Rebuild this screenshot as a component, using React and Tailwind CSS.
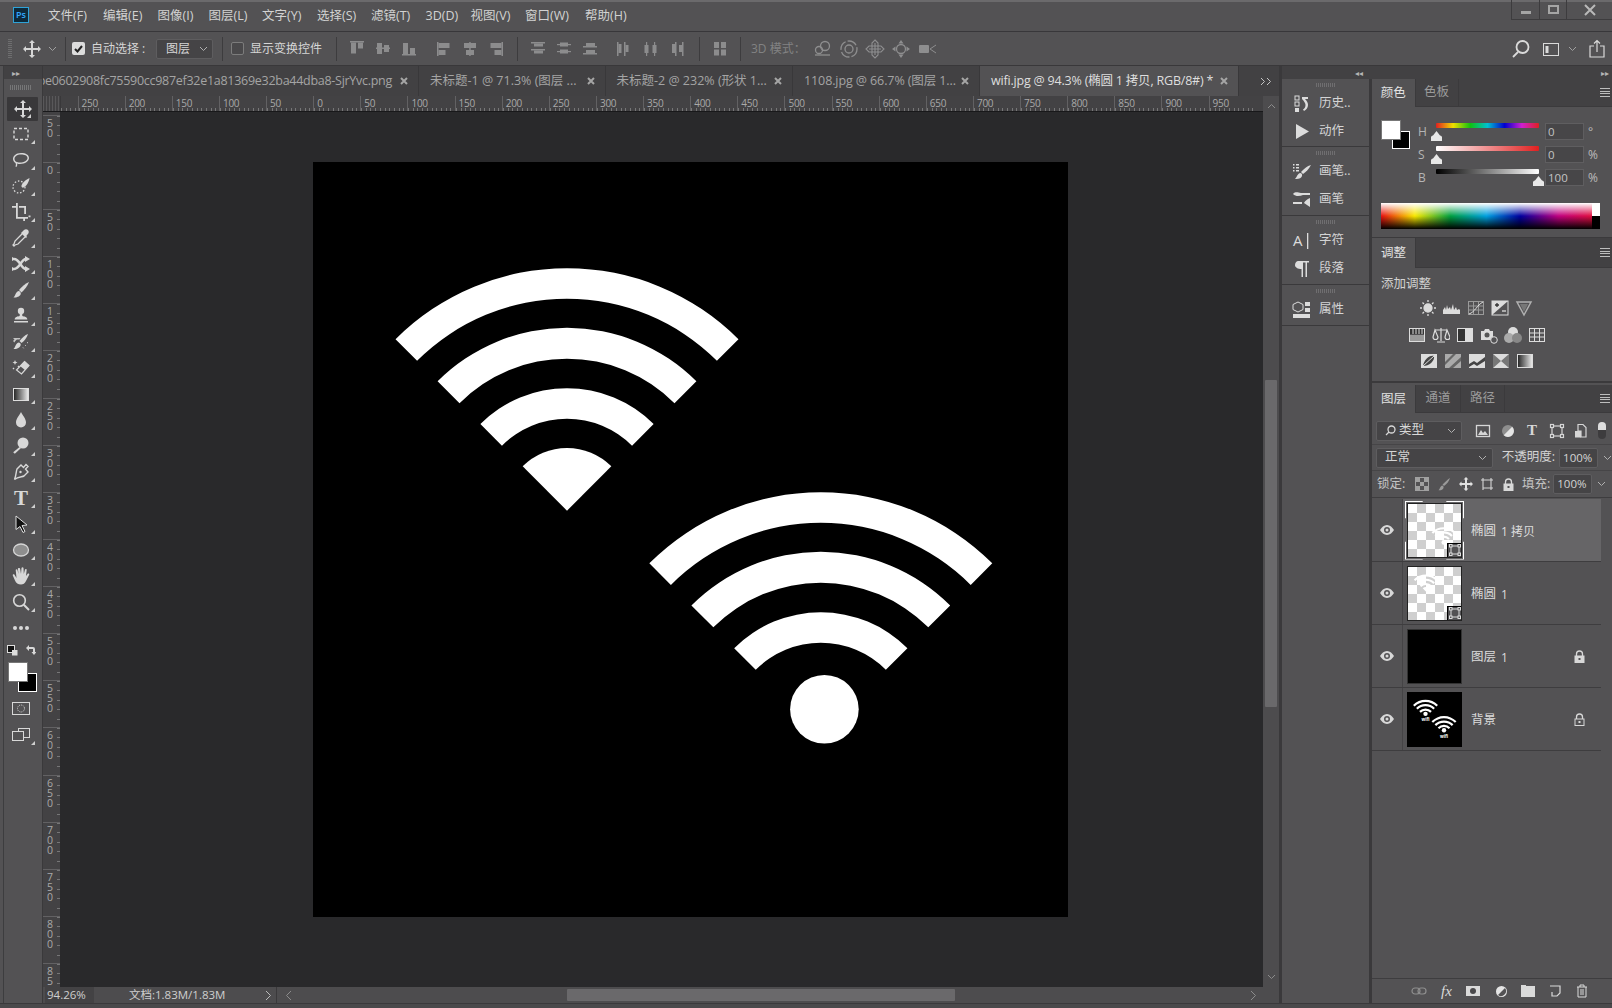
import React from "react";

const S = ({ w = 20, h = 20, className = "", children }) => (
  <svg width={w} height={h} viewBox={`0 0 ${w} ${h}`} fill="currentColor" className={`shrink-0 ${className}`}>
    {children}
  </svg>
);

const sectorPath = (cx, cy, ro, ri) => {
  const s = Math.SQRT1_2;
  const outer = `M${cx - ro * s} ${cy - ro * s}A${ro} ${ro} 0 0 1 ${cx + ro * s} ${cy - ro * s}`;
  if (!ri) return `${outer}L${cx} ${cy}Z`;
  return `${outer}L${cx + ri * s} ${cy - ri * s}A${ri} ${ri} 0 0 0 ${cx - ri * s} ${cy - ri * s}Z`;
};

const WifiBands = ({ cx, cy }) => (
  <>
    <path d={sectorPath(cx, cy, 242.5, 212)} />
    <path d={sectorPath(cx, cy, 183, 152)} />
    <path d={sectorPath(cx, cy, 122.5, 92)} />
  </>
);

const WifiArt = ({ size = 755, first = true, second = true, thumb = false, fill = "#fff", opacity = 1 }) => (
  <svg width={size} height={size} viewBox="0 0 755 755" fill={fill} opacity={opacity} className="block">
    {first && (
      <g>
        <WifiBands cx={254} cy={348.7} />
        {thumb ? <circle cx="254" cy="300" r="30" /> : <path d={sectorPath(254, 348.7, 62.7)} />}
      </g>
    )}
    {second && (
      <g>
        <WifiBands cx={507.8} cy={572.8} />
        <circle cx={thumb ? 507.8 : 511.4} cy={thumb ? 525 : 547.2} r={thumb ? 30 : 34.3} />
      </g>
    )}
    {thumb && (
      <g fontSize="60" fontWeight="700" fontFamily="'Open Sans',sans-serif" textAnchor="middle">
        <text x="254" y="395">wifi</text>
        <text x="507.8" y="625">wifi</text>
      </g>
    )}
  </svg>
);

const Chev = ({ className = "" }) => (
  <svg width="9" height="6" viewBox="0 0 9 6" fill="none" stroke="currentColor" className={`shrink-0 ${className}`}>
    <path d="M1 1l3.5 3.5L8 1" />
  </svg>
);

const Corner = () => (
  <svg width="4" height="4" viewBox="0 0 4 4" fill="#cfcfcf" className="absolute right-[7px] bottom-[3px]">
    <path d="M4 0v4H0z" />
  </svg>
);

const toolIcons = [
  <path d="M10 1l3 3h-2v5h5V7l3 3-3 3v-2h-5v5h2l-3 3-3-3h2v-5H4v2l-3-3 3-3v2h5V4H7z" />,
  <rect x="3" y="4.5" width="14" height="11" fill="none" stroke="currentColor" strokeWidth="1.4" strokeDasharray="3 2" />,
  <path d="M10 3c5 0 8 2 8 5s-4 6-9 6c-1 0-2 0-3-.5.5 1 .3 2.500-.7 3.500l-1-.7c.7-.7.8-2 .2-3.300C3 12 2 10.500 2 9c0-3 3-6 8-6zm0 1.500C6 4.500 3.500 6.500 3.500 9s2.500 3.500 5.500 3.500c4 0 7.500-2 7.500-4.500s-3-3.500-6.500-3.500z" />,
  <g><circle cx="8" cy="11" r="6" fill="none" stroke="currentColor" strokeWidth="1.3" strokeDasharray="1.500 1.800" /><path d="M18.500 2c-.5 4-3 8-6 9.500-1 .5-2.500-.5-2-2C11.500 6.500 15 3.500 18.500 2z" /></g>,
  <path d="M1 5h4V2h1.800v14H17v1.800h-3V20h-1.800v-2.200H5V6.800H1zM8 5h7v8h-1.800V6.800H8zM17.500 14.500h2v1.800h-2z" transform="translate(0 -1)" />,
  <g><path d="M12 5l3 3-8 8-3 1-1 1-1-1 1-1 1-3z" fill="none" stroke="currentColor" strokeWidth="1.3" /><path d="M11 4l2-2c1-1 3-1 4 0s1 3 0 4l-2 2 1 1-1 1-5-5 1-1z" /></g>,
  <g><path d="M3 5c6 0 7 10 12 10M3 15c6 0 7-10 12-10" fill="none" stroke="currentColor" strokeWidth="2.600" /><path d="M1 3l4 2-4 2zM1 13l4 2-4 2zM14 2l5 3-5 3zM14 12l5 3-5 3z" /></g>,
  <g><path d="M18 2c-1.500 4-4.500 8-7.500 10.500L8 10C10.500 7 14 3.500 18 2z" /><path d="M7.500 11c1.500 0 2.500 1.500 2.300 2.800C9.500 16 6 18 2.500 17.500 4.500 16 4.500 12 7.500 11z" /></g>,
  <g><circle cx="10" cy="5" r="3.200" /><path d="M8.700 7.500h2.600V10c2 .5 5 .8 5 3.500H3.700c0-2.700 3-3 5-3.500zM3 15h14v1.600H3z" /></g>,
  <g><path d="M17 2c-1 3.500-3.500 7-6.500 9l-2-2C11 6 14 3 17 2z" /><path d="M7.500 10.500c1.500 0 2.500 1.300 2.200 2.600C9.300 15.500 6 17.500 2.500 17c2-1.500 2-5.500 5-6.500z" /><path d="M2 6h7.500l-1 1.500H6c-1 .5-2 1.500-2.500 3L2 9l1.500-1.500z" opacity=".85" /><path d="M14 13l1 1M16 10.500l1.300.5M12 15.500l.8 1" fill="none" stroke="currentColor" strokeDasharray="1 1" /></g>,
  <g><path d="M13.500 3.500l4.500 4L10.500 16l-5-4z" fill="none" stroke="currentColor" strokeWidth="1.200" /><path d="M13.500 3.500l4.500 4-4 4.500-5-4z" /><path d="M4 2l.7 1.800L6.500 4.500 4.700 5.200 4 7l-.7-1.800L1.500 4.500l1.800-.7zM2.500 9.500l1 1-1 1-1-1zM7.500 7.500l1 1-1 1-1-1z" /></g>,
  <g><defs><linearGradient id="tg"><stop offset="0" stopColor="#222" /><stop offset="1" stopColor="#eee" /></linearGradient></defs><rect x="2.500" y="4.500" width="15" height="12" fill="url(#tg)" stroke="#ddd" /></g>,
  <path d="M10 2c1.500 3.500 5 6.500 5 10.500a5 5 0 0 1-10 0C5 8.500 8.500 5.500 10 2z" />,
  <g><circle cx="12" cy="7" r="5.500" /><path d="M8.500 11l1.300 1.300-6 5.500-1.600-1.500z" /></g>,
  <g><path d="M16 2.500l2 2-2.500 2.500L18 10l-4 4c-2 1-6 .5-9.500 3.500C6.500 13 6 9 7 7l4-4 2.500 2.500z" fill="none" stroke="currentColor" strokeWidth="1.400" transform="translate(-1 0)" /><circle cx="9.500" cy="10" r="1.200" /></g>,
  null,
  <path d="M5 2l11 9-5 .5 3 6-2 1-3-6-4 3z" fill="#111" stroke="#ddd" strokeWidth="1" />,
  <ellipse cx="10" cy="10" rx="7.500" ry="6" fill="#8e8e8e" stroke="#d5d5d5" strokeWidth="1.300" />,
  <path d="M8 2c.8 0 1 .5 1.200 1L10 8l.5-6c.2-1 1.800-1 2 0l.3 6 1.200-4.500c.3-1 1.800-.7 1.700.3L15 10l1.500-2c.8-1 2.200-.2 1.700.8L15 15c-1 2.500-3 3.500-5 3.500-3 0-5-1.500-6-4L1.800 9.500c-.4-1 1-1.700 1.700-.8L5.500 12l-.8-8c0-1 1.500-1.200 1.700-.2L7.500 8 6.900 3c0-.6.4-1 1.100-1z" />,
  <g fill="none" stroke="currentColor" strokeWidth="1.600"><circle cx="8.500" cy="8.500" r="5.800" /><path d="M12.800 12.800L18 18" strokeWidth="2" /></g>,
  <g><circle cx="4" cy="10" r="2" /><circle cx="10" cy="10" r="2" /><circle cx="16" cy="10" r="2" /></g>,
];

const Toolbar = () => (
  <div className="w-[40px] ml-[3px] border-l border-[#3d3d3f] border-r border-r-[#3a393b] bg-[#535254] flex flex-col shrink-0 text-[#d8d8d8]">
    <div className="h-[13px] bg-[#424143] flex items-center pl-[8px] text-[#b5b5b5] text-[8px] leading-none">▸▸</div>
    <div className="h-[17px] flex items-center justify-center pr-[4px]"><div className="w-[22px] h-[5px] bg-[repeating-linear-gradient(to_right,#767677_0_1px,transparent_1px_2px)]" /></div>
    <div className="flex flex-col mt-[1px]">
      {toolIcons.map((icon, i) => (
        <div key={i} className={`relative flex items-center justify-center ${i === 0 ? "h-[24px] bg-[#39383a] ml-[3px] mr-[4px] rounded-[1px]" : "h-[26px] pr-[4px]"}`}>
          {icon ? <S>{icon}</S> : <span className="font-['Liberation_Serif',serif] font-bold text-[21px] leading-none">T</span>}
          {i !== 20 && <Corner />}
        </div>
      ))}
    </div>
    <div className="h-[14px] mt-[2px] pl-[3px] flex items-center gap-[7px]">
      <S w={11} h={11}><rect x="0.500" y="0.500" width="7" height="7" fill="#111" stroke="#ddd" /><rect x="5" y="5" width="5.500" height="5.500" fill="#ddd" /></S>
      <S w={11} h={11}><path d="M1 3l3-3v2h4a2 2 0 0 1 2 2v3h1.500L9 10 6.500 7H8V4H4v2z" /></S>
    </div>
    <div className="relative h-[30px] mt-[5px]">
      <div className="w-[19px] h-[19px] ml-[14px] mt-[11px] bg-black border border-white" />
      <div className="absolute left-[4px] top-0 w-[20px] h-[20px] bg-white border border-[#777]" />
    </div>
    <div className="h-[26px] mt-[4px] flex items-center justify-center pr-[4px]">
      <S w={18} h={14}><rect x="0.500" y="0.500" width="17" height="12" fill="none" stroke="currentColor" /><circle cx="9" cy="6.500" r="3.500" fill="none" stroke="currentColor" strokeDasharray="1 1" /></S>
    </div>
    <div className="relative h-[26px] flex items-center justify-center pr-[4px]">
      <S w={18} h={14}><rect x="6.500" y="0.500" width="11" height="9" fill="none" stroke="currentColor" /><rect x="0.500" y="3.500" width="11" height="9" fill="#535254" stroke="currentColor" /></S>
      <Corner />
    </div>
  </div>
);

const menu = [
  ["文件(F)", 55],
  ["编辑(E)", 54.5],
  ["图像(I)", 51],
  ["图层(L)", 53.5],
  ["文字(Y)", 55],
  ["选择(S)", 54],
  ["滤镜(T)", 54.5],
  ["3D(D)", 45],
  ["视图(V)", 54.5],
  ["窗口(W)", 60],
  ["帮助(H)", 60],
];

const Bar = () => (
  <div className="h-[32px] shrink-0 bg-[#535254] border-t-2 border-[#6b6a6c] border-b border-b-[#38373a] flex items-start relative">
    <div className="w-[16px] h-[16px] ml-[13px] mt-[5px] bg-[#0e2a3a] border border-[#2fa3d8] text-[#31a8ff] text-[9px] leading-[14px] text-center font-semibold">Ps</div>
    <div className="ml-[19px] flex items-center h-[28px] text-[12.500px] text-[#d2d2d2]">
      {menu.map(([t, w]) => (
        <div key={t} className="flex items-center whitespace-nowrap" style={{ width: w }}>{t}</div>
      ))}
    </div>
    <div className="ml-auto h-[20px] w-[101px] -mt-[2px] flex border-l border-b border-[#3d3c3e] text-[#b9b9b9]">
      <div className="w-[28px] flex items-center justify-center border-r border-[#3d3c3e]"><div className="w-[10px] h-[3px] mt-[6px] bg-[#a5a5a5]" /></div>
      <div className="w-[27px] flex items-center justify-center border-r border-[#3d3c3e]"><div className="w-[11px] h-[9px] border-2 border-[#a5a5a5]" /></div>
      <div className="flex-1 flex items-center justify-center"><svg width="12" height="12" viewBox="0 0 12 12" stroke="currentColor" strokeWidth="2"><path d="M1 1l10 10M11 1L1 11" /></svg></div>
    </div>
  </div>
);

const VSep = ({ ml }) => <div className="w-px h-[24px] bg-[#3d3c3e] shrink-0" style={{ marginLeft: ml }} />;

const Al = ({ ml, kind }) => {
  const rows = {
    t: <><rect x="2" y="1" width="14" height="1.500" /><rect x="3" y="2.500" width="5" height="11" /><rect x="10" y="2.500" width="5" height="6" /></>,
    m: <><rect x="2" y="7.500" width="14" height="1.500" /><rect x="3" y="3" width="5" height="11" /><rect x="10" y="5" width="5" height="7" /></>,
    b: <><rect x="2" y="14" width="14" height="1.500" /><rect x="3" y="3" width="5" height="11" /><rect x="10" y="8" width="5" height="6" /></>,
    l: <><rect x="2" y="2" width="1.500" height="14" /><rect x="3.500" y="3" width="11" height="5" /><rect x="3.500" y="10" width="7" height="5" /></>,
    c: <><rect x="8.200" y="2" width="1.500" height="14" /><rect x="3" y="3" width="12" height="5" /><rect x="5" y="10" width="8" height="5" /></>,
    r: <><rect x="14.500" y="2" width="1.500" height="14" /><rect x="3.500" y="3" width="11" height="5" /><rect x="7.500" y="10" width="7" height="5" /></>,
    dt: <><rect x="2" y="2" width="14" height="1.500" /><rect x="5" y="3.500" width="9" height="3" /><rect x="2" y="9" width="14" height="1.500" /><rect x="5" y="10.500" width="9" height="3" /></>,
    dm: <><rect x="2" y="4" width="14" height="1.200" /><rect x="5" y="2.500" width="8" height="4" /><rect x="2" y="11" width="14" height="1.200" /><rect x="5" y="9.500" width="8" height="4" /></>,
    db: <><rect x="5" y="3" width="9" height="3" /><rect x="2" y="6" width="14" height="1.500" /><rect x="5" y="10" width="9" height="3" /><rect x="2" y="13" width="14" height="1.500" /></>,
    vl: <><rect x="3" y="2" width="1.500" height="14" /><rect x="4.500" y="4" width="3" height="9" /><rect x="10" y="2" width="1.500" height="14" /><rect x="11.500" y="5" width="3" height="7" /></>,
    vm: <><rect x="4" y="2" width="1.200" height="14" /><rect x="2.500" y="5" width="4" height="8" /><rect x="12" y="2" width="1.200" height="14" /><rect x="10.500" y="5" width="4" height="8" /></>,
    vr: <><rect x="6" y="2" width="1.500" height="14" /><rect x="3" y="4" width="3" height="9" /><rect x="13" y="2" width="1.500" height="14" /><rect x="10" y="5" width="3" height="7" /></>,
    gr: <><rect x="3" y="2" width="5" height="6" /><rect x="10" y="2" width="5" height="6" /><rect x="3" y="9.500" width="5" height="6" /><rect x="10" y="9.500" width="5" height="6" /></>,
  };
  return <svg width="18" height="18" viewBox="0 0 18 18" fill="#8c8c8d" className="shrink-0" style={{ marginLeft: ml }}>{rows[kind]}</svg>;
};

const Options = () => (
  <div className="h-[34px] shrink-0 bg-[#535254] border-b border-[#39383a] flex items-center text-[#d6d6d6] text-[12px] whitespace-nowrap">
    <div className="w-[4px] h-[20px] ml-[8px] bg-[repeating-linear-gradient(to_bottom,#6e6e6f_0_1px,transparent_1px_2px)]" />
    <S className="ml-[10px]"><path d="M10 1l3 3h-2v5h5V7l3 3-3 3v-2h-5v5h2l-3 3-3-3h2v-5H4v2l-3-3 3-3v2h5V4H7z" /></S>
    <Chev className="ml-[6px] text-[#a0a0a0]" />
    <VSep ml="8px" />
    <div className="ml-[6px] w-[13px] h-[13px] bg-[#dcdcdc] rounded-[2px] flex items-center justify-center shrink-0">
      <svg width="9" height="8" viewBox="0 0 9 8" fill="none" stroke="#222" strokeWidth="2"><path d="M1 4l2.500 2.500L8 1" /></svg>
    </div>
    <span className="ml-[6px] w-[56px]">自动选择 :</span>
    <div className="ml-[9px] w-[57px] h-[20px] bg-[#454446] border border-[#5e5d5f] rounded-[2px] flex items-center pl-[9px] justify-between pr-[4px]">
      图层<Chev className="text-[#b0b0b0]" />
    </div>
    <VSep ml="9px" />
    <div className="ml-[8px] w-[13px] h-[13px] border border-[#7c7c7c] rounded-[2px] bg-[#4a494b] shrink-0" />
    <span className="ml-[6px] w-[72px]">显示变换控件</span>
    <VSep ml="14px" />
    <Al ml="11px" kind="t" /><Al ml="8px" kind="m" /><Al ml="8px" kind="b" />
    <Al ml="17px" kind="l" /><Al ml="8px" kind="c" /><Al ml="8px" kind="r" />
    <VSep ml="12px" />
    <Al ml="11px" kind="dt" /><Al ml="8px" kind="dm" /><Al ml="8px" kind="db" />
    <Al ml="15px" kind="vl" /><Al ml="10px" kind="vm" /><Al ml="9px" kind="vr" />
    <VSep ml="12px" />
    <Al ml="11px" kind="gr" />
    <VSep ml="11px" />
    <span className="ml-[10px] text-[#828283] text-[12px] w-[46px]">3D 模式：</span>
    <div className="flex items-center text-[#8e8e8f]">
      <S className="ml-[16px]"><g fill="none" stroke="currentColor" strokeWidth="1.300"><circle cx="12" cy="7" r="4.500" /><circle cx="6" cy="11" r="3.500" /><path d="M2 16h15" /></g></S>
      <S className="ml-[6px]"><g fill="none" stroke="currentColor" strokeWidth="1.300"><circle cx="10" cy="10" r="8" strokeDasharray="10 2" /><circle cx="10" cy="10" r="4" /></g></S>
      <S className="ml-[6px]"><g fill="none" stroke="currentColor" strokeWidth="1.100"><path d="M10 1l3 3v3h3l3 3-3 3h-3v3l-3 3-3-3v-3H4l-3-3 3-3h3V4z" /><path d="M7 7h6v6H7zM10 4v12M4 10h12" /></g></S>
      <S className="ml-[6px]"><g fill="none" stroke="currentColor" strokeWidth="1.300"><circle cx="10" cy="10" r="4.500" /></g><path d="M10 1l2.500 3.500h-5zM10 19l-2.500-3.500h5zM1 10l3.500-2.500v5zM19 10l-3.500 2.500v-5z" /></S>
      <S className="ml-[7px]"><rect x="1" y="6" width="10" height="8" rx="1" /><path d="M12 10l6-4M12 10l6 4" fill="none" stroke="currentColor" /></S>
    </div>
    <div className="ml-auto flex items-center text-[#dadada] pr-[5px]">
      <S><g fill="none" stroke="currentColor" strokeWidth="1.800"><circle cx="11.500" cy="8" r="6" /><path d="M7 13l-5 5" /></g></S>
      <S className="ml-[10px]"><g fill="none" stroke="currentColor"><rect x="2.500" y="4.500" width="15" height="12" /></g><rect x="4.500" y="7" width="3" height="7" /></S>
      <Chev className="ml-[7px] text-[#a0a0a0]" />
      <S className="ml-[10px]"><g fill="none" stroke="currentColor" strokeWidth="1.200"><path d="M7 7H3v11h14V7h-4M10 13V1.500M7 4.500l3-3 3 3" /></g></S>
    </div>
  </div>
);

const tabs = [
  { t: "be0602908fc75590cc987ef32e1a81369e32ba44dba8-SjrYvc.png", w: 376, clip: true, cls: "tracking-[-0.28px] mr-[4px]" },
  { t: "未标题-1 @ 71.3% (图层 ...", w: 186.5 },
  { t: "未标题-2 @ 232% (形状 1...", w: 187.5 },
  { t: "1108.jpg @ 66.7% (图层 1...", w: 187, cls: "tracking-[-0.1px]" },
  { t: "wifi.jpg @ 94.3% (椭圆 1 拷贝, RGB/8#) *", w: 259, active: true, cls: "tracking-[-0.2px]" },
];

const Tabs = () => (
  <div className="h-[30px] shrink-0 bg-[#424143] flex items-stretch text-[12.500px]">
    {tabs.map(({ t, w, clip, active, cls = "" }) => (
      <div
        key={t}
        className={`flex items-center shrink-0 overflow-hidden whitespace-nowrap border-r border-[#39383a] ${clip ? "justify-end" : "pl-[11px]"} ${active ? "bg-[#535254] text-[#dedede]" : "text-[#a4a4a4]"}`}
        style={{ width: w }}
      >
        <span className={`${clip ? "" : "flex-1"} ${cls}`}>{t}</span>
        <svg width="8" height="8" viewBox="0 0 8 8" stroke="#a5a5a5" strokeWidth="2" className="shrink-0 ml-[4px] mr-[10px]"><path d="M1 1l6 6M7 1L1 7" /></svg>
      </div>
    ))}
    <div className="flex-1 flex items-center justify-end pr-[6px] text-[#c5c5c5]">
      <svg width="13" height="9" viewBox="0 0 13 9" fill="none" stroke="currentColor"><path d="M1 1l3.500 3.500L1 8M7 1l3.500 3.500L7 8" /></svg>
    </div>
  </div>
);

const hLabels = [250, 200, 150, 100, 50, 0, 50, 100, 150, 200, 250, 300, 350, 400, 450, 500, 550, 600, 650, 700, 750, 800, 850, 900, 950];
const vLabels = [50, 0, 50, 100, 150, 200, 250, 300, 350, 400, 450, 500, 550, 600, 650, 700, 750, 800, 850];

const HRuler = () => (
  <div className="h-[16px] shrink-0 bg-[#434244] flex overflow-hidden border-b border-[#18181a]">
    <div className="w-[18px] shrink-0 border-r border-[#39383a] bg-[repeating-linear-gradient(to_right,#59585a_0_1px,transparent_1px_3px)]" />
    <div className="w-[16.600px] shrink-0 flex flex-col justify-end"><div className="h-[3px] bg-[repeating-linear-gradient(to_right,#767677_0_1px,transparent_1px_4.713px)]" /></div>
    {hLabels.map((n, i) => (
      <div key={i} className="w-[47.130px] shrink-0 border-l border-[#626163] flex flex-col justify-end relative">
        <span className="text-[10px] leading-[13px] pl-[3px] tracking-[-0.3px] text-[#a9a9a9] -mb-[1px]">{n}</span>
        <div className="h-[3px] -mt-[1px] bg-[repeating-linear-gradient(to_right,#767677_0_1px,transparent_1px_4.713px)]" />
      </div>
    ))}
  </div>
);

const VRuler = () => (
  <div className="w-[18px] shrink-0 bg-[#434244] overflow-hidden border-r border-[#29292b]">
    <div className="mt-[2.870px]">
      {vLabels.map((n, i) => (
        <div key={i} className="h-[47.130px] border-t border-[#626163] flex justify-between overflow-hidden">
          <div className="flex flex-col pl-[4px] pt-[2px]">
            {String(n).split("").map((d, k) => (
              <span key={k} className="text-[10.500px] leading-[10px] text-[#a9a9a9]">{d}</span>
            ))}
          </div>
          <div className="w-[3px] bg-[repeating-linear-gradient(to_bottom,#767677_0_1px,transparent_1px_9.426px)]" />
        </div>
      ))}
    </div>
  </div>
);

const Document = () => (
  <div className="flex-1 min-w-0 flex flex-col">
    <Tabs />
    <div className="flex-1 min-h-0 flex">
      <div className="flex-1 min-w-0 flex flex-col">
        <HRuler />
        <div className="flex-1 min-h-0 flex">
          <VRuler />
          <div className="flex-1 min-w-0 bg-[#29292b] overflow-hidden pl-[252px] pt-[50px]">
            <div className="w-[755px] h-[755px] bg-black"><WifiArt /></div>
          </div>
        </div>
      </div>
      <div className="w-[16px] shrink-0 bg-[#4d4c4e] flex flex-col items-center text-[#8c8c8c]">
        <Chev className="mt-[7px] rotate-180" />
        <div className="w-[12px] h-[327px] mt-[271px] bg-[#6a696b] rounded-[1px]" />
        <Chev className="mt-[267px]" />
      </div>
    </div>
    <div className="h-[16px] shrink-0 bg-[#4d4c4e] flex items-center text-[11.500px] text-[#cfcfcf] whitespace-nowrap">
      <div className="w-[49px] ml-[2px] h-full bg-[#434244] pl-[2px] leading-[16px] text-[11.500px]">94.26%</div>
      <span className="ml-[35px] w-[132px]">文档:1.83M/1.83M</span>
      <svg width="7" height="11" viewBox="0 0 7 11" fill="none" stroke="#bbb" className="ml-[4px]"><path d="M1 1l4.500 4.500L1 10" /></svg>
      <div className="ml-[4px] w-px h-full bg-[#3a393b]" />
      <svg width="7" height="11" viewBox="0 0 7 11" fill="none" stroke="#8c8c8c" className="ml-[8px]"><path d="M6 1L1.500 5.500 6 10" /></svg>
      <div className="ml-[275px] w-[388px] h-[12px] bg-[#6a696b] rounded-[1px]" />
      <svg width="7" height="11" viewBox="0 0 7 11" fill="none" stroke="#8c8c8c" className="ml-[295px]"><path d="M1 1l4.500 4.500L1 10" /></svg>
    </div>
  </div>
);

const Grip = () => (
  <div className="h-[11px] flex items-center justify-center"><div className="w-[20px] h-[4px] mt-[1px] bg-[repeating-linear-gradient(to_right,#6f6e70_0_1px,transparent_1px_2px)]" /></div>
);

const DockRow = ({ icon, label }) => (
  <div className="h-[27.500px] flex items-center text-[12.500px] text-[#d4d4d4] pl-[10px]">
    <S className="text-[#dcdcdc]">{icon}</S>
    <span className="ml-[7px] whitespace-nowrap">{label}</span>
  </div>
);

const Dock = () => (
  <div className="w-[87px] shrink-0 flex flex-col">
    <div className="h-[68px] border-b border-[#3a393b]">
      <Grip />
      <DockRow label="历史.." icon={<><rect x="3" y="2" width="4" height="4" fill="none" stroke="currentColor" /><rect x="3" y="8" width="4" height="4" fill="none" stroke="currentColor" /><rect x="3" y="14" width="4" height="4" /><path d="M10 3h6v2h-3c2 2 3 4 3 6 0 3-2 5-4 6l-1-1.500c1.500-1 2.500-2.500 2.500-4.500 0-1.500-1-3.500-3.500-6z" /></>} />
      <DockRow label="动作" icon={<path d="M4 3l13 7.500L4 18z" />} />
    </div>
    <div className="h-[69px] border-b border-[#3a393b]">
      <Grip />
      <DockRow label="画笔.." icon={<><path d="M19 3c-2 4-5 7-8 9l-2-2c3-3 6-6 10-7z" /><path d="M8 11c1.500 0 2.500 1.300 2 3-.5 2-3.500 3.500-7 3 2-1.500 2-5 5-6z" /><path d="M1 2h1.500v1.500H1zM1 5h1.500v1.500H1zM1 8h1.500v1.500H1zM4 2h3v1.500H4zM4 5h3v1.500H4zM4 8h3v1.500H4z" /></>} />
      <DockRow label="画笔" icon={<><path d="M1 5c3-3 5-1 8-1h9v2h-7c-3 1-7 2-10-1zM1 13h9v2H1zM18 9v9l-6-4c1-2 3-4 6-5z" /></>} />
    </div>
    <div className="h-[69px] border-b border-[#3a393b]">
      <Grip />
      <DockRow label="字符" icon={<><text x="1" y="15" fontSize="15" fontFamily="'Open Sans',sans-serif">A</text><rect x="15" y="2" width="1.300" height="16" /></>} />
      <DockRow label="段落" icon={<path d="M6 3h11v1.500h-2V19h-1.500V4.500H11V19H9.500v-8C6 11 3 9.500 3 7s2-4 3-4z" />} />
    </div>
    <div className="h-[41px] border-b border-[#3a393b]">
      <Grip />
      <DockRow label="属性" icon={<><path d="M6 2l5 2.500v5L6 12 1 9.500v-5z" fill="none" stroke="currentColor" /><rect x="13" y="2" width="5" height="4" /><rect x="13" y="8" width="5" height="4" /><rect x="1" y="14" width="17" height="4" /></>} />
    </div>
  </div>
);

const TabHead = ({ tabs: ts, className = "" }) => (
  <div className={`bg-[#424143] flex items-stretch border-b border-[#3b3a3c] text-[12.500px] shrink-0 ${className}`}>
    {ts.map(([t, w], i) => (
      <div key={t} className={`flex items-center justify-center border-r border-[#3b3a3c] ${i === 0 ? "bg-[#535254] text-[#e2e2e2] -mb-px" : "text-[#9b9b9b]"}`} style={{ width: w }}>{t}</div>
    ))}
    <div className="ml-auto mr-[2px] self-center flex flex-col gap-[1.500px] w-[10px]">
      <div className="h-px bg-[#bdbdbd]" /><div className="h-px bg-[#bdbdbd]" /><div className="h-px bg-[#bdbdbd]" /><div className="h-px bg-[#bdbdbd]" />
    </div>
  </div>
);

const Thumb = () => (
  <svg width="11" height="10" viewBox="0 0 11 10" fill="#e8e8e8" className="shrink-0"><path d="M5.500 0L9 4.500A2 2 0 0 1 11 6v4H0V6a2 2 0 0 1 2-1.500z" /></svg>
);

const SliderRow = ({ label, bar, thumbLeft, value, unit, thumbTop = "top-[8px]" }) => (
  <div className="h-[23px] flex text-[12px] text-[#b5b5b5]">
    <span className="w-[18px] pt-[1px] leading-[16px]">{label}</span>
    <div className="w-[109px] relative">
      <div className={`h-[5px] w-[103px] rounded-[1px] ${bar}`} />
      <div className={`absolute ${thumbTop}`} style={{ left: thumbLeft }}><Thumb /></div>
    </div>
    <div className="w-[39px] h-[17px] bg-[#474648] border border-[#5f5e60] text-[11.500px] leading-[15px] pl-[2px] text-[#c4c4c4]">{value}</div>
    <span className="ml-[4px] text-[12px] leading-[17px] text-[#bdbdbd]">{unit}</span>
  </div>
);

const ColorPanel = () => (
  <div className="h-[159px] shrink-0 flex flex-col border-b border-[#3b3a3c]">
    <TabHead tabs={[["颜色", 43.5], ["色板", 43]]} className="h-[28px]" />
    <div className="pt-[13px] px-[9px]">
      <div className="flex h-[63px]">
        <div className="w-[37px] relative">
          <div className="absolute left-[11px] top-[11px] w-[18px] h-[18px] bg-black border border-white" />
          <div className="absolute left-0 top-0 w-[20px] h-[20px] bg-white border border-[#777]" />
        </div>
        <div className="pt-[3px]">
          <SliderRow label="H" value="0" unit="°" thumbLeft="-5.5px" bar="bg-[linear-gradient(to_right,#e02020,#f0e000,#10c010,#00c0d0,#0000d0,#d020d0,#e02020)]" />
          <SliderRow label="S" value="0" unit="%" thumbLeft="-5.5px" bar="bg-[linear-gradient(to_right,#fff,#e02020)]" />
          <SliderRow label="B" value="100" unit="%" thumbLeft="96.5px" thumbTop="top-[7px]" bar="bg-[linear-gradient(to_right,#000,#fff)]" />
        </div>
      </div>
      <div className="mt-[20px] h-[26px] w-[219px] flex">
        <div className="flex-1 bg-[linear-gradient(to_bottom,#fff_0%,rgba(255,255,255,0)_50%,rgba(0,0,0,0)_50%,#000_100%),linear-gradient(to_right,#e81010_0%,#f8e800_16%,#00a040_33%,#00a0e0_50%,#0000a0_66%,#c00080_84%,#e01040_100%)]" />
        <div className="w-[8px] flex flex-col"><div className="flex-1 bg-white" /><div className="flex-1 bg-black" /></div>
      </div>
    </div>
  </div>
);

const Ad = ({ children }) => <S w={18} h={18} className="text-[#dcdcdc]">{children}</S>;

const AdjustPanel = () => (
  <div className="h-[145px] shrink-0 flex flex-col border-b-2 border-[#3b3a3c]">
    <TabHead tabs={[["调整", 44]]} className="h-[30px]" />
    <div className="pl-[9px] pt-[7px] text-[12.500px] text-[#d2d2d2] leading-[18px]">添加调整</div>
    <div className="flex flex-col mt-[6px] gap-[8.500px]">
      <div className="h-[18px] flex gap-[6px] pl-[47px]">
        <Ad><g stroke="currentColor" strokeWidth="1.300"><circle cx="9" cy="9" r="4" /><path d="M9 1v2M9 15v2M1 9h2M15 9h2M3.500 3.500l1.500 1.500M13 13l1.500 1.500M3.500 14.500L5 13M13 5l1.500-1.500" /></g></Ad>
        <Ad><path d="M0 15V11l2-3 1 3 1-5 1 4 2-2 1 3 2-6 1 6 2-3 1 3 2-1 1 1v4z" /></Ad>
        <Ad><g fill="none" stroke="#9a9a9a"><rect x="1.500" y="2.500" width="15" height="13" /><path d="M6.500 2.500v13M11.500 2.500v13M1.500 7h15M1.500 11h15" /><path d="M2 15C8 13 10 6 16 3" stroke="#e0e0e0" /></g></Ad>
        <Ad><rect x="1" y="2" width="16" height="14" fill="none" stroke="currentColor" /><path d="M1 16L17 2H1z" /><path d="M4 6h4M6 4v4" stroke="#333" strokeWidth="1.300" /><path d="M11 12h4" stroke="#ddd" strokeWidth="1.300" /></Ad>
        <Ad><path d="M2 3h14L9 16z" fill="none" stroke="#b0b0b0" strokeWidth="1.500" /><path d="M5 5h8l-4 8z" fill="#777" /></Ad>
      </div>
      <div className="h-[18px] flex gap-[6px] pl-[36px]">
        <Ad><rect x="1.500" y="2.500" width="15" height="13" fill="none" stroke="currentColor" /><path d="M2 3h14v5H2z" fill="#333" /><path d="M5 3v5M8 3v5M11 3v5M14 3v5" stroke="#ddd" /><rect x="2" y="9" width="14" height="6" fill="#999" /></Ad>
        <Ad><g fill="none" stroke="currentColor" strokeWidth="1.200"><path d="M9 2v13M5 16h8M3 4h12" /><path d="M3 4L1 11a2.500 2.500 0 0 0 5 0zM15 4l-2 7a2.500 2.500 0 0 0 5 0z" /></g></Ad>
        <Ad><rect x="1.500" y="2.500" width="15" height="13" fill="none" stroke="currentColor" /><rect x="2" y="3" width="7" height="12" fill="#333" /><rect x="9" y="3" width="7" height="12" fill="#ddd" /></Ad>
        <Ad><path d="M1 5h3l1-2h4l1 2h3v9H1z" /><circle cx="7" cy="9" r="2.500" fill="#555" /><circle cx="14" cy="14" r="3.300" fill="#535254" stroke="currentColor" /></Ad>
        <Ad><circle cx="9" cy="6" r="5" /><circle cx="5" cy="12" r="5" fill="#aaa" /><circle cx="13" cy="12" r="5" fill="#888" /></Ad>
        <Ad><g fill="none" stroke="currentColor"><rect x="1.500" y="2.500" width="15" height="13" /><path d="M1.500 7h15M1.500 11h15M6.500 2.500v13M11.500 2.500v13" /></g></Ad>
      </div>
      <div className="h-[18px] flex gap-[6px] pl-[48px]">
        <Ad><rect x="1" y="2" width="16" height="14" /><path d="M3 14C4 8 9 3 14 4c1 5-5 10-11 10z" fill="#444" /><path d="M14 4L3 14" stroke="#ddd" /></Ad>
        <Ad><rect x="1" y="2" width="16" height="14" fill="#aaa" /><path d="M1 10L9 2h3L1 13zM5 16L17 5v4l-8 7z" fill="#666" /></Ad>
        <Ad><rect x="1" y="2" width="16" height="14" /><path d="M1 12l5-3 3 2 8-6v4l-8 5-3-2-5 3z" fill="#444" /></Ad>
        <Ad><rect x="1" y="2" width="16" height="14" /><path d="M1 2l8 7-8 7zM17 2L9 9l8 7z" fill="#777" /></Ad>
        <Ad><defs><linearGradient id="gm"><stop offset="0" stopColor="#222" /><stop offset="1" stopColor="#eee" /></linearGradient></defs><rect x="1.500" y="2.500" width="15" height="13" fill="url(#gm)" stroke="#ddd" /></Ad>
      </div>
    </div>
  </div>
);

const Eye = () => (
  <svg width="14" height="10" viewBox="0 0 14 10" fill="#d8d8d8" className="shrink-0"><path d="M7 0c3 0 5.500 2.500 7 5-1.500 2.500-4 5-7 5S1.500 7.500 0 5c1.500-2.500 4-5 7-5zm0 2a3 3 0 1 0 0 6 3 3 0 0 0 0-6zm0 1.500a1.500 1.500 0 1 1 0 3 1.500 1.500 0 0 1 0-3z" fillRule="evenodd" /></svg>
);

const Lock = ({ open }) => (
  <svg width="11" height="13" viewBox="0 0 11 13" className="shrink-0">
    <path d="M2.500 6V4a3 3 0 0 1 6 0v2" fill="none" stroke="#d8d8d8" strokeWidth="1.300" />
    {open
      ? <rect x="1" y="6" width="9" height="6.500" fill="none" stroke="#d8d8d8" />
      : <rect x="0.500" y="5.500" width="10" height="7.500" fill="#d8d8d8" />}
    <rect x="4.500" y="8" width="2" height="2" fill={open ? "#d8d8d8" : "#535254"} />
  </svg>
);

const SmartBadge = () => (
  <div className="absolute right-0 bottom-0 w-[14px] h-[14px] bg-[#535254] border-l border-t border-black flex items-center justify-center">
    <svg width="12" height="12" viewBox="0 0 12 12" fill="none" stroke="#dcdcdc"><rect x="2" y="2" width="8" height="8" /><rect x="0.500" y="0.500" width="2.500" height="2.500" fill="#535254" /><rect x="9" y="0.500" width="2.500" height="2.500" fill="#535254" /><rect x="0.500" y="9" width="2.500" height="2.500" fill="#535254" /><rect x="9" y="9" width="2.500" height="2.500" fill="#535254" /></svg>
  </div>
);

const Checker = ({ first = false, second = false, selected }) => (
  <div className="relative w-[55px] h-[55px] border border-[#222] bg-white bg-[repeating-conic-gradient(#cfcfcf_0_25%,#fff_0_50%)] bg-size-[18px_18px]">
    <WifiArt size={53} first={first} second={second} fill="#fff" />
    <SmartBadge />
    {selected && (
      <div className="absolute -inset-[3px] border border-white [clip-path:polygon(0_0,30%_0,30%_2px,70%_2px,70%_0,100%_0,100%_30%,calc(100%-2px)_30%,calc(100%-2px)_70%,100%_70%,100%_100%,70%_100%,70%_calc(100%-2px),30%_calc(100%-2px),30%_100%,0_100%,0_70%,2px_70%,2px_30%,0_30%)]" />
    )}
  </div>
);

const LayerRow = ({ thumb, name, num, lock, active }) => (
  <div className="h-[63px] w-[229px] flex items-stretch border-b border-[#3e3d3f] shrink-0">
    <div className="w-[31px] flex items-center justify-center border-r border-[#454446]"><Eye /></div>
    <div className={`flex-1 flex items-center pl-[4px] ${active ? "bg-[#666567]" : ""}`}>
      {thumb}
      <div className="ml-[9px] mt-[3px] text-[12.500px] text-[#dcdcdc] whitespace-nowrap flex items-center gap-[5px]">
        <span>{name}</span>
        {num && <span className="text-[12px]">{num}</span>}
      </div>
      {lock && <div className="ml-auto mr-[16px]"><Lock open={lock === "open"} /></div>}
    </div>
  </div>
);

const Field = ({ children, className = "" }) => (
  <div className={`bg-[#454446] border border-[#5e5d5f] rounded-[2px] flex items-center ${className}`}>{children}</div>
);

const LayersPanel = () => (
  <div className="flex-1 min-h-0 flex flex-col mt-[2px]">
    <TabHead tabs={[["图层", 44], ["通道", 45], ["路径", 44]]} className="h-[28px]" />
    <div className="h-[32px] flex items-center pl-[4px] pt-[4px] border-b border-[#464547]">
      <Field className="w-[86px] h-[20px] pl-[8px] pr-[5px] text-[12.500px] text-[#d8d8d8] justify-between">
        <span className="flex items-center gap-[3px]">
          <svg width="11" height="11" viewBox="0 0 11 11" fill="none" stroke="currentColor" strokeWidth="1.300"><circle cx="6.500" cy="4.500" r="3.500" /><path d="M4 7l-3 3" /></svg>类型
        </span>
        <Chev className="text-[#b0b0b0]" />
      </Field>
      <div className="flex items-center ml-[13px] gap-[8.500px] text-[#d6d6d6]">
        <S w={16} h={16}><rect x="1.500" y="2.500" width="13" height="11" fill="none" stroke="currentColor" strokeWidth="1.300" /><path d="M3 12l3-5 2 3 2-2 3 4z" /></S>
        <S w={16} h={16}><circle cx="8" cy="8" r="6" fill="#8e8e8e" /><path d="M12.200 3.700A6 6 0 0 1 3.700 12.200z" fill="#e5e5e5" /></S>
        <span className="w-[16px] text-center font-['Liberation_Serif',serif] font-bold text-[15px] leading-none">T</span>
        <S w={16} h={16}><g fill="none" stroke="currentColor" strokeWidth="1.200"><rect x="3" y="3" width="10" height="10" /><rect x="1.500" y="1.500" width="3" height="3" fill="#535254" /><rect x="11.500" y="1.500" width="3" height="3" fill="#535254" /><rect x="1.500" y="11.500" width="3" height="3" fill="#535254" /><rect x="11.500" y="11.500" width="3" height="3" fill="#535254" /></g></S>
        <S w={16} h={16}><path d="M5 1.500h5l3 3V14H8V8H5z" fill="none" stroke="currentColor" strokeWidth="1.200" /><rect x="2" y="8" width="6" height="6.500" /></S>
        <div className="w-[8px] h-[17px] rounded-t-full bg-[linear-gradient(to_bottom,#ddd_45%,#3d3c3e_45%)] rounded-b-full" />
      </div>
    </div>
    <div className="h-[26px] flex items-center pl-[4px] border-b border-[#464547] text-[12.500px] text-[#d4d4d4] whitespace-nowrap">
      <Field className="w-[117px] h-[20px] pl-[8px] pr-[5px] justify-between"><span>正常</span><Chev className="text-[#b0b0b0]" /></Field>
      <span className="ml-[9px]">不透明度:</span>
      <Field className="w-[39px] h-[20px] ml-[4px] pl-[3px] text-[11.500px]">100%</Field>
      <Chev className="ml-[5px] text-[#b0b0b0]" />
    </div>
    <div className="h-[27px] flex items-center pl-[5px] border-b border-[#3e3d3f] text-[12.500px] text-[#c4c4c4] whitespace-nowrap">
      <span className="w-[38px]">锁定:</span>
      <S w={14} h={14} className="text-[#a0a0a0]"><path d="M1 1h4v4H1zM9 1h4v4H9zM5 5h4v4H5zM1 9h4v4H1zM9 9h4v4H9z" /><rect x="0.500" y="0.500" width="13" height="13" fill="none" stroke="currentColor" /></S>
      <S w={14} h={14} className="ml-[8px] text-[#9a9a9a]"><path d="M13 1c-1 3-3 6-6 8L5.500 7.500C8 5 10.500 2.500 13 1zM5 8.500c1 0 2 1 1.500 2.500-.5 1.500-2.500 2.500-5 2.300C3 12 3 9.500 5 8.500z" /></S>
      <S w={14} h={14} className="ml-[8px] text-[#e0e0e0]"><path d="M7 0l2.500 2.500H8V6h3.500V4.500L14 7l-2.500 2.500V8H8v3.500h1.500L7 14l-2.500-2.500H6V8H2.500v1.500L0 7l2.500-2.500V6H6V2.500H4.500z" /></S>
      <S w={14} h={14} className="ml-[7px] text-[#d6d6d6]"><path d="M3 1v12M1 3h12M11 1v12M3 11h10" fill="none" stroke="currentColor" strokeWidth="1.100" /></S>
      <div className="ml-[9px]"><Lock /></div>
      <span className="ml-[8px]">填充:</span>
      <Field className="w-[39px] h-[20px] ml-[3px] pl-[3px] text-[11.500px] text-[#d4d4d4]">100%</Field>
      <Chev className="ml-[5px] text-[#b0b0b0]" />
    </div>
    <div className="flex-1 min-h-0 flex flex-col pt-[1px]">
      <LayerRow active name="椭圆" num="1 拷贝" thumb={<Checker selected second />} />
      <LayerRow name="椭圆" num="1" thumb={<Checker first />} />
      <LayerRow name="图层" num="1" lock="closed" thumb={<div className="w-[55px] h-[55px] bg-black border border-[#333]" />} />
      <LayerRow name="背景" lock="open" thumb={<div className="w-[55px] h-[55px] bg-black"><WifiArt size={55} thumb /></div>} />
    </div>
    <div className="h-[25px] shrink-0 border-t border-[#3e3d3f] flex items-center justify-end pr-[24px] text-[#dadada]">
      <S w={16} h={16} className="text-[#8e8e8e]"><g fill="none" stroke="currentColor" strokeWidth="1.200"><rect x="1" y="5" width="8" height="6" rx="3" /><rect x="7" y="5" width="8" height="6" rx="3" /></g></S>
      <span className="ml-[14px] w-[18px] italic font-['Liberation_Serif',serif] text-[15px] leading-none">fx</span>
      <S w={14} h={12} className="ml-[7px]"><path d="M0 1h14v10H0z" /><circle cx="7" cy="6" r="3" fill="#4a494b" /></S>
      <S w={13} h={13} className="ml-[15px]"><circle cx="6.500" cy="6.500" r="5.500" fill="#e5e5e5" /><path d="M10 3L3 10a5 5 0 0 0 7-7z" fill="#535254" /></S>
      <S w={14} h={12} className="ml-[13px]"><path d="M0 0h5v1h9v11H0z" /></S>
      <S w={12} h={12} className="ml-[14px]"><path d="M1 1h10v7l-3 3H3V7" fill="none" stroke="currentColor" strokeWidth="1.200" /></S>
      <S w={12} h={14} className="ml-[15px]"><path d="M1 3h10M4 3V1h4v2M2 3v10h8V3M5 5v6M7 5v6" fill="none" stroke="currentColor" /></S>
    </div>
  </div>
);

const RightDock = () => (
  <div className="w-[330px] shrink-0 flex flex-col">
    <div className="h-[13px] shrink-0 bg-[#424143] flex items-center text-[8px] leading-none text-[#b5b5b5]">
      <span className="ml-[73px]">◂◂</span>
      <span className="ml-auto mr-[3px]">▸▸</span>
    </div>
    <div className="flex-1 min-h-0 flex bg-[#535254]">
      <Dock />
      <div className="flex-1 min-w-0 border-l-[3px] border-[#3a393b] flex flex-col">
        <ColorPanel />
        <AdjustPanel />
        <LayersPanel />
      </div>
    </div>
  </div>
);

export default function App() {
  return (
    <div className="w-[1612px] h-[1008px] overflow-hidden bg-[#535254] flex flex-col font-['Open_Sans','Noto_Sans_CJK_SC',sans-serif]">
      <Bar />
      <Options />
      <div className="flex-1 min-h-0 flex">
        <Toolbar />
        <Document />
        <div className="w-[3px] shrink-0 bg-[#3a393b]" />
        <RightDock />
      </div>
      <div className="h-[5px] shrink-0 border-t border-[#3a393b] bg-[#4a494b]" />
    </div>
  );
}
